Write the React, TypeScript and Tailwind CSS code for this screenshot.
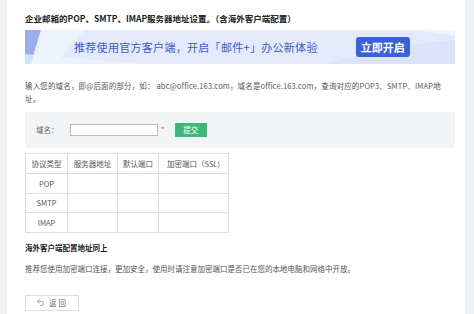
import { Undo2 } from "lucide-react";

const font = { fontFamily: '"Noto Sans CJK SC", "Noto Sans", sans-serif' };

const rows = ["POP", "SMTP", "IMAP"];

export default function App() {
  return (
    <div className="flex min-h-[314px] bg-[#eef0f3]" style={font}>
      <div className="w-[7px] shrink-0" />
      <div className="flex-1 bg-white pt-[12px] pl-[18px] pr-[10px]">
        <h1 className="text-[8.5px] font-bold leading-[12px] text-[#222]">
          企业邮箱的POP、SMTP、IMAP服务器地址设置。（含海外客户端配置）
        </h1>

        <div className="relative mt-[6px] flex h-[34px] w-[430px] items-center overflow-hidden bg-[#e4eafb]">
          <svg className="absolute inset-0" width="430" height="34" viewBox="0 0 430 34">
            <polygon points="0,0 16,0 6,34 0,34" fill="#98aeef" />
            <polygon points="16,0 60,0 30,34 6,34" fill="#eef2fd" opacity="0.8" />
            <polygon points="0,24 120,34 0,34" fill="#f0f3fd" opacity="0.7" />
            <path d="M300,34 C350,20 400,12 430,10 L430,34 Z" fill="#d8e0f9" opacity="0.8" />
            <polygon points="395,0 430,0 430,6" fill="#f2f5fe" />
          </svg>
          <span className="relative ml-[49px] text-[11px] tracking-[0.3px] text-[#3c5cc6]">
            推荐使用官方客户端，开启「邮件+」办公新体验
          </span>
          <span className="relative ml-[38px] flex h-[20px] w-[54px] items-center justify-center rounded-[3px] bg-[#3a62d8] text-[11px] font-bold text-white">
            立即开启
          </span>
        </div>

        <p className="mt-[15px] w-[430px] text-[7.5px] leading-[13px] tracking-[0.15px] text-[#555]">
          <span className="block whitespace-nowrap">
            输入您的域名，即@后面的部分，如： abc@office.163.com，域名是office.163.com，查询对应的POP3、SMTP、IMAP地
          </span>
          <span className="block">址。</span>
        </p>

        <div className="mt-[7px] flex h-[36px] w-[430px] items-center bg-[#f3f4f5] pl-[11px]">
          <span className="w-[34px] text-[7.5px] text-[#666]">域名：</span>
          <input className="h-[12px] w-[88px] border border-[#bbb] bg-white" />
          <span className="ml-[3px] text-[8px] text-[#e33]">*</span>
          <span className="ml-[10px] flex h-[14px] w-[32px] items-center justify-center bg-[#3fb67a] text-[7.5px] text-white">
            提交
          </span>
        </div>

        <table className="mt-[5px] border-collapse text-[7.5px] text-[#555]">
          <tbody>
            <tr className="h-[20px]">
              <td className="w-[42px] border border-[#ddd] text-center">协议类型</td>
              <td className="w-[50px] border border-[#ddd] text-center">服务器地址</td>
              <td className="w-[41px] border border-[#ddd] text-center">默认端口</td>
              <td className="w-[70px] border border-[#ddd] text-center">加密端口（SSL)</td>
            </tr>
            {rows.map((r) => (
              <tr key={r} className="h-[19.5px]">
                <td className="border border-[#ddd] text-center">{r}</td>
                <td className="border border-[#ddd]" />
                <td className="border border-[#ddd]" />
                <td className="border border-[#ddd]" />
              </tr>
            ))}
          </tbody>
        </table>

        <h2 className="mt-[9px] text-[7.5px] font-bold leading-[12px] text-[#222]">海外客户端配置地址同上</h2>
        <p className="mt-[9px] text-[7.5px] leading-[12px] text-[#555]">
          推荐您使用加密端口连接，更加安全，使用时请注意加密端口是否已在您的本地电脑和网络中开放。
        </p>

        <button className="mt-[20px] flex h-[16px] w-[54px] items-center justify-center gap-[4px] border border-[#ddd] bg-white text-[7.5px] tracking-[2px] text-[#666]">
          <Undo2 size={9} strokeWidth={1.5} />
          返回
        </button>
      </div>
      <div className="w-[9px] shrink-0" />
    </div>
  );
}
